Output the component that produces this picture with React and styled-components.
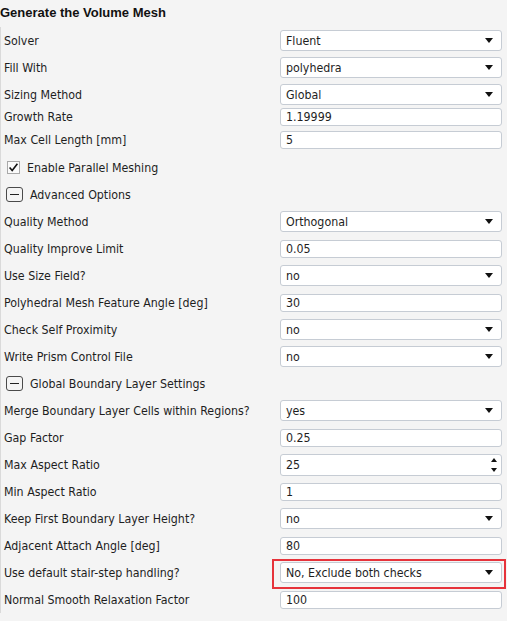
import React from "react";
import styled, { createGlobalStyle, css } from "styled-components";

const Global = createGlobalStyle`
  html, body {
    margin: 0;
    padding: 0;
    background: #f4f4f4;
  }
  body {
    font-family: "DejaVu Sans Condensed", "DejaVu Sans", sans-serif;
    font-size: 12.3px;
    color: #1e1e1e;
  }
`;

const Page = styled.div`
  width: 507px;
  height: 621px;
  background: #f4f4f4;
  overflow: hidden;
`;

const Title = styled.div`
  height: 27px;
  line-height: 25px;
  font-family: "Liberation Sans", Arial, sans-serif;
  font-size: 13px;
  font-weight: bold;
  color: #111;
`;

const Body = styled.div`
  border-left: 1px solid #dadada;
  padding: 0 5px 0 3px;
  display: flex;
  flex-direction: column;
`;

const Row = styled.div`
  display: grid;
  grid-template-columns: 1fr 222px;
  align-items: ${(p) => (p.$compact ? "start" : "center")};
  height: ${(p) => (p.$compact ? 23 : 27)}px;
  line-height: 18px;
`;

const Label = styled.div`
  white-space: nowrap;
`;

const fieldBase = css`
  position: relative;
  box-sizing: border-box;
  background: #fff;
  border: 1px solid #c6ccd4;
  border-radius: 3px;
  display: flex;
  align-items: center;
  padding-left: 5px;
  white-space: nowrap;
`;

const Select = styled.div`
  ${fieldBase}
  height: 21px;
  justify-content: space-between;
  padding-right: 8px;
`;

const Input = styled.div`
  ${fieldBase}
  height: ${(p) => (p.$spin ? 22 : 18)}px;
  justify-content: space-between;
  padding-right: 4px;
`;

const Caret = styled.span`
  width: 0;
  height: 0;
  border-left: 4px solid transparent;
  border-right: 4px solid transparent;
  border-top: 5px solid #111;
`;

const Spin = styled.span`
  display: flex;
  flex-direction: column;
  gap: 6px;
`;

const Arrow = styled.span`
  width: 0;
  height: 0;
  border-left: 3.5px solid transparent;
  border-right: 3.5px solid transparent;
  ${(p) =>
    p.$up ? "border-bottom: 4px solid #111;" : "border-top: 4px solid #111;"}
`;

const Highlight = styled.span`
  position: absolute;
  top: -4px;
  left: -9px;
  right: -5px;
  bottom: -7px;
  border: 2px solid #e6333b;
  pointer-events: none;
`;

const Toggle = styled.div`
  display: flex;
  align-items: center;
  height: 27px;
  gap: 7px;
  padding-left: ${(p) => (p.$section ? 2 : 3)}px;
`;

const CheckBox = styled.span`
  box-sizing: border-box;
  width: 13px;
  height: 13px;
  border: 1px solid #a9a9a9;
  background: #fafafa;
  display: flex;
  align-items: center;
  justify-content: center;
`;

const MinusBox = styled.span`
  box-sizing: border-box;
  width: 17px;
  height: 15px;
  border: 1.5px solid #4a4a4a;
  border-radius: 3px;
  display: flex;
  align-items: center;
  justify-content: center;
  &::after {
    content: "";
    width: 9px;
    height: 1.6px;
    background: #222;
  }
`;

const Field = ({ f }) => {
  if (f.type === "select")
    return (
      <Select>
        <span>{f.value}</span>
        <Caret />
        {f.mark && <Highlight />}
      </Select>
    );
  if (f.type === "spin")
    return (
      <Input $spin>
        <span>{f.value}</span>
        <Spin>
          <Arrow $up />
          <Arrow />
        </Spin>
      </Input>
    );
  return (
    <Input>
      <span>{f.value}</span>
    </Input>
  );
};

const rows = [
  { label: "Solver", type: "select", value: "Fluent" },
  { label: "Fill With", type: "select", value: "polyhedra" },
  { label: "Sizing Method", type: "select", value: "Global" },
  { label: "Growth Rate", type: "text", value: "1.19999", compact: true },
  { label: "Max Cell Length [mm]", type: "text", value: "5", compact: true },
  { check: "Enable Parallel Meshing" },
  { section: "Advanced Options" },
  { label: "Quality Method", type: "select", value: "Orthogonal" },
  { label: "Quality Improve Limit", type: "text", value: "0.05" },
  { label: "Use Size Field?", type: "select", value: "no" },
  { label: "Polyhedral Mesh Feature Angle [deg]", type: "text", value: "30" },
  { label: "Check Self Proximity", type: "select", value: "no" },
  { label: "Write Prism Control File", type: "select", value: "no" },
  { section: "Global Boundary Layer Settings" },
  { label: "Merge Boundary Layer Cells within Regions?", type: "select", value: "yes" },
  { label: "Gap Factor", type: "text", value: "0.25" },
  { label: "Max Aspect Ratio", type: "spin", value: "25" },
  { label: "Min Aspect Ratio", type: "text", value: "1" },
  { label: "Keep First Boundary Layer Height?", type: "select", value: "no" },
  { label: "Adjacent Attach Angle [deg]", type: "text", value: "80" },
  {
    label: "Use default stair-step handling?",
    type: "select",
    value: "No, Exclude both checks",
    mark: true,
  },
  { label: "Normal Smooth Relaxation Factor", type: "text", value: "100" },
];

export default function App() {
  return (
    <>
      <Global />
      <Page>
        <Title>Generate the Volume Mesh</Title>
        <Body>
          {rows.map((r, i) => {
            if (r.check)
              return (
                <Toggle key={i}>
                  <CheckBox>
                    <svg width="11" height="11" viewBox="0 0 11 11">
                      <path
                        d="M1.6 5.6 L4.2 8.6 L9.4 1.8"
                        fill="none"
                        stroke="#111"
                        strokeWidth="1.6"
                      />
                    </svg>
                  </CheckBox>
                  <span>{r.check}</span>
                </Toggle>
              );
            if (r.section)
              return (
                <Toggle key={i} $section>
                  <MinusBox />
                  <span>{r.section}</span>
                </Toggle>
              );
            return (
              <Row key={i} $compact={r.compact}>
                <Label>{r.label}</Label>
                <Field f={r} />
              </Row>
            );
          })}
        </Body>
      </Page>
    </>
  );
}
